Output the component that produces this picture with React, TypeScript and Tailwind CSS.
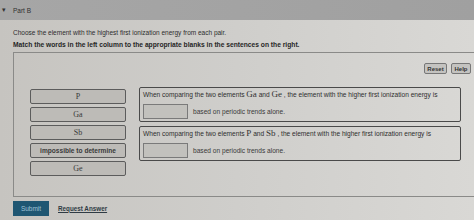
const sans = "font-['Liberation_Sans',Arial,sans-serif]";
const serif = "font-['Liberation_Serif','Times_New_Roman',serif]";

const choices = ["P", "Ga", "Sb", "impossible to determine", "Ge"];

function El({ children }: { children: string }) {
  return <span className={`${serif} text-[9px] text-[#333]`}>{children}</span>;
}

function Sentence({ a, b }: { a: string; b: string }) {
  return (
    <div className="h-[35px] rounded-[2px] border border-[#4a4a4a] pl-[3px] pt-[1px]">
      <div className="leading-[11px] text-[6.6px] text-[#2e2e2e]">
        When comparing the two elements <El>{a}</El> and <El>{b}</El> , the element with the higher first ionization energy is
      </div>
      <div className="mt-[4px] flex items-center gap-[5px]">
        <div className="h-[15px] w-[45px] border border-[#7a7a7a] bg-[#c2c1bd]" />
        <span className="text-[6.6px] text-[#3a3a3a]">based on periodic trends alone.</span>
      </div>
    </div>
  );
}

export default function App() {
  return (
    <div className={`${sans} relative h-[220px] w-[474px] overflow-hidden bg-gradient-to-r from-[#c6c4c0] via-[#cfcecb] to-[#d9d8d5] text-[#2a2a2a]`}>
      {/* header band */}
      <div className="flex h-[20px] items-center bg-gradient-to-r from-[#a6a6a6] to-[#a0a0a0] pl-[2px] pt-[1px]">
        <span className="text-[7px] text-[#333]">▾</span>
        <span className="ml-[7px] text-[6.5px] text-[#303030]">Part B</span>
      </div>

      <div className="pl-[13px]">
        <p className="mt-[9px] text-[6.5px] leading-[8px] text-[#2d2d2d]">
          Choose the element with the highest first ionization energy from each pair.
        </p>
        <p className="mt-[4px] text-[6.7px] font-bold leading-[8px] text-[#262626]">
          Match the words in the left column to the appropriate blanks in the sentences on the right.
        </p>

        {/* drag & drop box */}
        <div className="mt-[3px] h-[145px] w-[480px] border-y border-l border-[#8a8a88]">
          <div className="flex justify-end gap-[4px] pr-[22px] pt-[10px]">
            <button className="h-[11px] w-[23px] rounded-[2px] border border-[#777] bg-[#c4c3c0] text-[6px] font-bold leading-none text-[#333]">
              Reset
            </button>
            <button className="h-[11px] w-[20px] rounded-[2px] border border-[#777] bg-[#c4c3c0] text-[6px] font-bold leading-none text-[#333]">
              Help
            </button>
          </div>

          <div className="mt-[13px] flex pl-[16px]">
            <div className="mt-[2px] flex w-[96px] flex-col gap-[3px]">
              {choices.map((c) => (
                <div
                  key={c}
                  className={`flex h-[15px] items-center justify-center rounded-[2px] border border-[#5c5c5c] bg-[#bdbbb7] ${
                    c.length > 2
                      ? `${sans} text-[6.6px] font-bold text-[#3a3a3a]`
                      : `${serif} text-[8px] text-[#3a3a3a]`
                  }`}
                >
                  {c}
                </div>
              ))}
            </div>
            <div className="ml-[13px] flex w-[322px] flex-col gap-[4px]">
              <Sentence a="Ga" b="Ge" />
              <Sentence a="P" b="Sb" />
            </div>
          </div>
        </div>

        <div className="mt-[4px] flex items-center gap-[9px]">
          <button className="h-[15px] w-[36px] bg-[#1e5672] text-[6.5px] text-[#9fc3d8]">Submit</button>
          <span className="text-[6.3px] font-bold text-[#2f3b44] underline">Request Answer</span>
        </div>
      </div>
    </div>
  );
}
